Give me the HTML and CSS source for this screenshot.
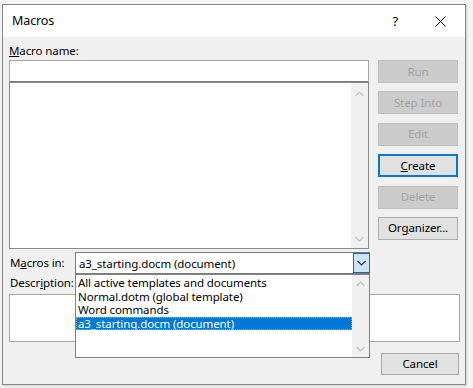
FILE: index.html
```html
<!DOCTYPE html>
<html>
<head>
<meta charset="utf-8">
<link rel="stylesheet" href="styles.css">
</head>
<body>
<div class="dialog">
  <div class="titlebar">
    <span class="title">Macros</span>
    <span class="help">?</span>
    <span class="close"><svg width="11" height="11" viewBox="0 0 11 11"><path d="M0.5 0.5 L10.5 10.5 M10.5 0.5 L0.5 10.5" stroke="#000" stroke-width="1" fill="none"/></svg></span>
  </div>
  <div class="content">
    <div class="top">
      <div class="leftcol">
        <div class="label"><u>M</u>acro name:</div>
        <div class="input"></div>
        <div class="listbox">
          <div class="vscroll">
            <svg width="9" height="6" viewBox="0 0 9 6"><path d="M0.5 5 L4.5 1 L8.5 5" stroke="#c2c2c2" stroke-width="1.2" fill="none"/></svg>
            <svg width="9" height="6" viewBox="0 0 9 6"><path d="M0.5 1 L4.5 5 L8.5 1" stroke="#c2c2c2" stroke-width="1.2" fill="none"/></svg>
          </div>
        </div>
      </div>
      <div class="buttons">
        <div class="btn disabled">Run</div>
        <div class="btn disabled">Step Into</div>
        <div class="btn disabled">Edit</div>
        <div class="btn default"><u>C</u>reate</div>
        <div class="btn disabled">Delete</div>
        <div class="btn">Or<u>g</u>anizer...</div>
      </div>
    </div>
    <div class="inrow">
      <div class="inlabel">M<u>a</u>cros in:</div>
      <div class="combo">
        <span class="combotext">a3_starting.docm (document)</span>
        <span class="combobtn"><svg width="9" height="6" viewBox="0 0 9 6"><path d="M0.5 1 L4.5 5 L8.5 1" stroke="#333" stroke-width="1.1" fill="none"/></svg></span>
        <div class="popup">
          <div class="items">
            <div class="item">All active templates and documents</div>
            <div class="item">Normal.dotm (global template)</div>
            <div class="item">Word commands</div>
            <div class="item selected">a3_starting.docm (document)</div>
          </div>
          <div class="vscroll popscroll">
            <svg width="9" height="6" viewBox="0 0 9 6"><path d="M0.5 5 L4.5 1 L8.5 5" stroke="#c2c2c2" stroke-width="1.2" fill="none"/></svg>
            <svg width="9" height="6" viewBox="0 0 9 6"><path d="M0.5 1 L4.5 5 L8.5 1" stroke="#c2c2c2" stroke-width="1.2" fill="none"/></svg>
          </div>
        </div>
      </div>
    </div>
    <div class="desclabel">Descr<u>i</u>ption:</div>
    <div class="descbox"></div>
    <div class="footer">
      <div class="btn cancel">Cancel</div>
    </div>
  </div>
</div>
</body>
</html>
```

FILE: styles.css
```css
html, body {
  margin: 0;
  padding: 0;
}
body {
  background: #f4f4f4;
  width: 473px;
  height: 388px;
  overflow: hidden;
  font-family: "Noto Sans", "Open Sans", sans-serif;
  font-size: 11.5px;
  letter-spacing: -0.1px;
  color: #000;
}
.dialog {
  margin: 4px 0 0 2px;
  width: 462px;
  height: 379px;
  border: 1px solid #858585;
  background: #f0f0f0;
  box-shadow: 1px 1px 2px rgba(0,0,0,0.15);
  position: relative;
}
.titlebar {
  height: 32px;
  background: #fff;
  display: flex;
  align-items: center;
}
.title {
  font-size: 12.5px;
  margin-left: 9px;
  flex: 1;
  padding-bottom: 1px;
}
.help {
  font-size: 13px;
  margin-right: 37px;
  padding-bottom: 1px;
}
.close {
  width: 11px;
  height: 11px;
  margin-right: 19px;
  display: flex;
}
.content {
  padding: 0 0 0 6px;
}
.top {
  display: flex;
  gap: 9px;
}
.leftcol {
  width: 360px;
}
.label {
  margin-top: 6px;
  height: 17px;
  line-height: 16px;
}
u {
  text-decoration: underline;
  text-underline-offset: 1px;
}
.input {
  height: 20px;
  border: 1px solid #a6a6a6;
  border-bottom-color: #7a7a7a;
  background: #fff;
}
.listbox {
  height: 165px;
  border: 1px solid #8a8a8a;
  background: #fff;
  display: flex;
  justify-content: flex-end;
}
.vscroll {
  width: 17px;
  background: #f0f0f0;
  display: flex;
  flex-direction: column;
  justify-content: space-between;
  align-items: center;
  padding: 8px 0 6px;
}
.buttons {
  padding-top: 23px;
  display: flex;
  flex-direction: column;
  gap: 8.4px;
}
.btn {
  width: 78px;
  height: 21px;
  border: 1px solid #adadad;
  background: #e1e1e1;
  display: flex;
  align-items: center;
  justify-content: center;
  line-height: 14px;
}
.btn.disabled {
  background: #cccccc;
  border-color: #bfbfbf;
  color: #a3a3a3;
}
.btn.default {
  border: 2px solid #0078d7;
  width: 76px;
  height: 19px;
}
.inrow {
  display: flex;
  align-items: center;
  margin-top: 3px;
  height: 22px;
}
.inlabel {
  width: 65px;
  line-height: 16px;
  padding-left: 1px;
}
.combo {
  width: 293px;
  height: 20px;
  border: 1px solid #7a7a7a;
  background: #fff;
  display: flex;
  align-items: center;
  position: relative;
}
.combotext {
  flex: 1;
  padding-left: 3px;
}
.combobtn {
  width: 17px;
  height: 20px;
  box-sizing: border-box;
  border: 1px solid #2a64a8;
  background: #cce4f7;
  display: flex;
  align-items: center;
  justify-content: center;
  margin-right: -1px;
}
.popup {
  position: absolute;
  left: -1px;
  top: 21px;
  width: 293px;
  height: 82px;
  border: 1px solid #828282;
  background: #fff;
  display: flex;
  z-index: 2;
}
.items {
  flex: 1;
  padding-top: 1px;
}
.item {
  height: 13.5px;
  line-height: 13.5px;
  padding-left: 2px;
  white-space: nowrap;
}
.item.selected {
  background: #0078d7;
  color: #fff;
  outline: 1px dotted #f0a030;
  outline-offset: -1px;
}
.popscroll {
  padding: 6px 0 5px;
}
.desclabel {
  line-height: 16px;
  margin-top: 1px;
  padding-left: 1px;
}
.descbox {
  margin-top: 3px;
  width: 449px;
  height: 46px;
  border: 1px solid #a6a6a6;
  background: #fff;
}
.footer {
  display: flex;
  justify-content: flex-end;
  width: 450px;
  margin-top: 11px;
}
.cancel {
  width: 76px;
  height: 20px;
}
```
